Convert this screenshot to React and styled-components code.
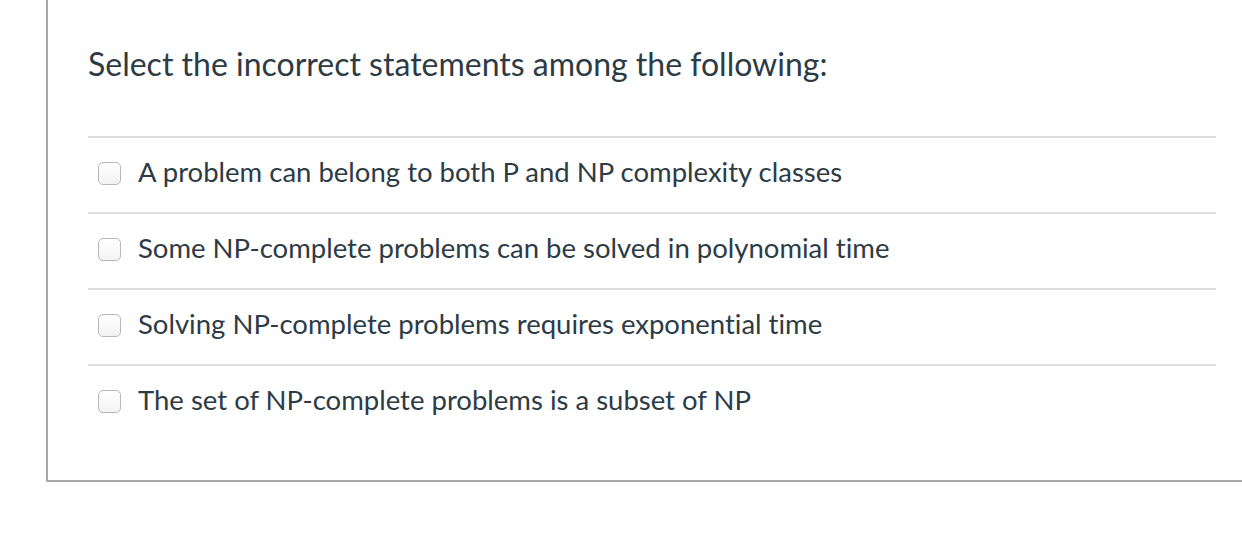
import React from 'react';
import styled, { createGlobalStyle } from 'styled-components';

const GlobalStyle = createGlobalStyle`
  html, body {
    margin: 0;
    padding: 0;
    background: #ffffff;
    overflow: hidden;
  }
  body {
    font-family: Lato, "Open Sans", "Liberation Sans", sans-serif;
    font-variant-ligatures: none;
    color: #2d3b45;
  }
`;

const Page = styled.div`
  width: 1242px;
  height: 558px;
  overflow: hidden;
`;

const Card = styled.div`
  margin-left: 46px;
  width: 1220px;
  border-left: 2px solid #a8a8a8;
  border-bottom: 2px solid #a8a8a8;
  padding: 46px 24px 40px 40px;
  box-sizing: border-box;
`;

const Question = styled.div`
  font-size: 32px;
  line-height: 36px;
  margin-bottom: 54px;
`;

const Answers = styled.div`
  display: flex;
  flex-direction: column;
  width: 1128px;
`;

const Answer = styled.label`
  display: flex;
  align-items: center;
  gap: 17px;
  height: 76px;
  box-sizing: border-box;
  padding: 0 0 7px 10px;
  border-top: 2px solid #dddddd;
  font-size: 27.5px;
`;

const Box = styled.span`
  flex: none;
  width: 23px;
  height: 23px;
  box-sizing: border-box;
  border: 1px solid #b8b8b8;
  border-radius: 5px;
  background: linear-gradient(#ffffff, #f3f3f3);
  margin-top: 3px;
`;

const answers = [
  'A problem can belong to both P and NP complexity classes',
  'Some NP-complete problems can be solved in polynomial time',
  'Solving NP-complete problems requires exponential time',
  'The set of NP-complete problems is a subset of NP',
];

export default function App() {
  return (
    <Page>
      <GlobalStyle />
      <Card>
        <Question>Select the incorrect statements among the following:</Question>
        <Answers>
          {answers.map(text => (
            <Answer key={text}>
              <Box />
              <span>{text}</span>
            </Answer>
          ))}
        </Answers>
      </Card>
    </Page>
  );
}
